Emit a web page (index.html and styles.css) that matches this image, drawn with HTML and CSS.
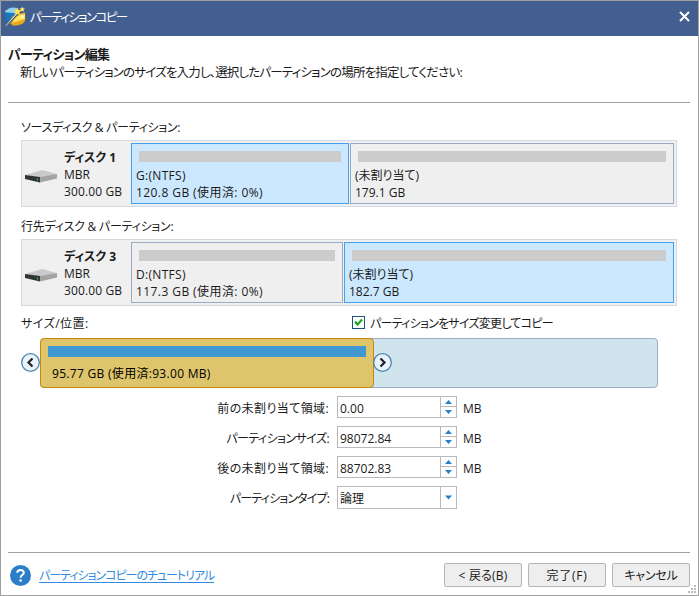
FILE: index.html
```html
<!DOCTYPE html>
<html lang="ja">
<head>
<meta charset="utf-8">
<title>パーティションコピー</title>
<link rel="stylesheet" href="styles.css">
</head>
<body>
<svg class="defs" aria-hidden="true">
  <symbol id="drive" viewBox="0 0 32 13">
    <path d="M0 5L17 0L32 4L15 7.500Z" fill="#cacaca"/>
    <path d="M0 5L15 7V12.500L0 9Z" fill="#333"/>
    <path d="M15 7L32 4V8.500L15 12.500Z" fill="#a4a4a4"/>
    <path d="M12.500 8.500v2" stroke="#28c83c" stroke-width="1.200"/>
  </symbol>
  <symbol id="arrows" viewBox="0 0 15 20">
    <path d="M4 7L7.5 3L11 7ZM4 13H11L7.5 17Z" fill="#2581cb"/>
  </symbol>
</svg>
<div class="window">
  <header class="titlebar">
    <svg class="app-icon" viewBox="0 0 24 24">
      <path d="M1 6Q7 0 14 3L13 11L3 13Z" fill="#8ed2ee"/>
      <path d="M1 7L12 8L6 18Q1 16 1 7" fill="#1978bd"/>
      <path d="M9 11L22 7V16Q20 21 10 21L5 18Z" fill="#e8a91c"/>
      <path d="M10 12L22 9V14L9 18Z" fill="#ffdf55"/>
      <path d="M2 22L14 9" stroke="#56636e" stroke-width="2.2"/>
      <path d="M2 21L13 9" stroke="#d8e5ec"/>
      <path d="M14 2l1.300 2.600 3 .4-2.200 2.100.6 3-2.700-1.500-2.700 1.500.6-3L9.700 5l3-.4z" fill="#ffe34d"/>
      <path d="M19 1l.8 1.800 2 .2-1.400 1.400.3 2-1.700-1-1.700 1 .3-2L16.200 3l2-.2z" fill="#ffe96e"/>
      <path d="M19 8l1 2 2 .3-1.500 1.500.4 2.200-2-1-2 1 .4-2.200L16 10.300l2-.3z" fill="#fff6a0"/>
    </svg>
    <span class="caption">パーティションコピー</span>
    <svg class="close" viewBox="0 0 11 11"><path d="M1 1L10 10M10 1L1 10" stroke="#fff" stroke-width="2"/></svg>
  </header>
  <section class="intro">
    <h1><span class="heading">パーティション編集</span></h1>
    <p><span class="sub">新しいパーティションのサイズを入力し、選択したパーティションの場所を指定してください:</span></p>
  </section>
  <main>
    <div class="label"><span class="l-source">ソースディスク &amp; パーティション:</span></div>
    <div class="disk">
      <svg class="drive"><use href="#drive"/></svg>
      <div class="info"><b class="name">ディスク 1</b><span>MBR</span><span class="cap">300.00 GB</span></div>
      <div class="part selected w218"><i></i><span class="drv">G:(NTFS)</span><span class="used">120.8 GB (使用済: 0%)</span></div>
      <div class="part rest"><i></i><span class="free">(未割り当て)</span><span>179.1 GB</span></div>
    </div>
    <div class="label second"><span class="l-dest">行先ディスク &amp; パーティション:</span></div>
    <div class="disk">
      <svg class="drive"><use href="#drive"/></svg>
      <div class="info"><b class="name">ディスク 3</b><span>MBR</span><span class="cap">300.00 GB</span></div>
      <div class="part w212"><i></i><span class="drv">D:(NTFS)</span><span class="used">117.3 GB (使用済: 0%)</span></div>
      <div class="part selected rest"><i></i><span class="free">(未割り当て)</span><span>182.7 GB</span></div>
    </div>
    <div class="options">
      <span class="l-size">サイズ/位置:</span>
      <label><svg class="check" viewBox="0 0 13 13"><rect x=".5" y=".5" width="12" height="12" fill="#fff" stroke="#1c5180"/><path d="M3 5.500L5.500 8.500L10 3.500" fill="none" stroke="#21a121" stroke-width="2.200"/></svg><span class="l-check">パーティションをサイズ変更してコピー</span></label>
    </div>
    <div class="slider">
      <svg class="knob" viewBox="0 0 19 19"><circle cx="9.500" cy="9.500" r="8.800" fill="#e8f3fb" stroke="#4e86ad" stroke-width="1.300"/><path d="M11.500 5.500L7.500 9.500L11.500 13.500" fill="none" stroke="#222" stroke-width="2.200"/></svg>
      <div class="track">
        <div class="block"><i></i><span class="l-block">95.77 GB (使用済:93.00 MB)</span></div>
        <svg class="knob" viewBox="0 0 19 19"><circle cx="9.500" cy="9.500" r="8.800" fill="#e8f3fb" stroke="#4e86ad" stroke-width="1.300"/><path d="M7.500 5.500L11.500 9.500L7.500 13.500" fill="none" stroke="#222" stroke-width="2.200"/></svg>
      </div>
    </div>
    <div class="form">
      <div class="row"><span class="field-name"><span class="l-area">前の未割り当て領域:</span></span><div class="field"><span>0.00</span><div class="spin"><svg><use href="#arrows"/></svg></div></div><span class="unit">MB</span></div>
      <div class="row"><span class="field-name"><span class="l-psize">パーティションサイズ:</span></span><div class="field"><span>98072.84</span><div class="spin"><svg><use href="#arrows"/></svg></div></div><span class="unit">MB</span></div>
      <div class="row"><span class="field-name"><span class="l-area">後の未割り当て領域:</span></span><div class="field"><span>88702.83</span><div class="spin"><svg><use href="#arrows"/></svg></div></div><span class="unit">MB</span></div>
      <div class="row"><span class="field-name"><span class="l-ptype">パーティションタイプ:</span></span><div class="field combo"><span>論理</span><div class="drop"><svg viewBox="0 0 15 21"><path d="M4 8.500H11L7.500 12.500Z" fill="#2581cb"/></svg></div></div></div>
    </div>
  </main>
  <footer>
    <svg class="help" viewBox="0 0 21 21"><circle cx="10.500" cy="10.500" r="10.500" fill="#2b7fc9"/><path d="M7.200 7.800Q7.400 5 10.500 5T13.800 7.700Q13.800 9 12.200 10Q10.600 11 10.600 12.800" fill="none" stroke="#fff" stroke-width="2"/><circle cx="10.600" cy="15.500" r="1.250" fill="#fff"/></svg>
    <a class="tutorial"><span class="l-link">パーティションコピーのチュートリアル</span></a>
    <button><span class="b-back">&lt; 戻る(B)</span></button>
    <button><span class="b-done">完了(F)</span></button>
    <button><span class="b-cancel">キャンセル</span></button>
    <svg class="grip" viewBox="0 0 9 9"><path d="M6 0h2v2h-2zM3 3h2v2h-2zM6 3h2v2h-2zM0 6h2v2h-2zM3 6h2v2h-2zM6 6h2v2h-2z" fill="#bbb"/></svg>
  </footer>
</div>
</body>
</html>
```

FILE: styles.css
```css
* { box-sizing: border-box; }
body { margin: 0; font: 12px/17px "Open Sans", "Noto Sans CJK JP", sans-serif; font-feature-settings: "palt"; color: #1a1a1a; }
span, b { white-space: nowrap; }
svg { display: block; flex: none; }
i { display: block; }
.defs { position: absolute; width: 0; height: 0; }
.window { width: 699px; height: 596px; border: 1px solid #a0a0a0; background: #fff; display: flex; flex-direction: column; }
.titlebar { height: 35px; background: #435f90; color: #fff; display: flex; align-items: center; padding: 0 8px 4px 3px; }
.app-icon { width: 23px; height: 24px; }
.caption { margin: 2px 0 0 3px; font-size: 12.5px; letter-spacing: -1.55px; flex: 1; }
.close { width: 11px; height: 11px; }
.intro { height: 67px; margin: 0 8px 0 7px; padding-top: 9px; border-bottom: 1px solid #a0a0a0; font-size: 13px; line-height: 18px; }
h1, p { margin: 0; font-size: inherit; }
p { padding-left: 12px; }
.heading { letter-spacing: -.7px; }
.sub { font-size: 12.5px; letter-spacing: -.81px; }
main { flex: 1; padding: 15px 21px 0 20px; }
.label { height: 22px; line-height: 20px; }
.label.second { margin-top: 10px; }
.l-source { letter-spacing: -.3px; }
.l-dest { letter-spacing: -.25px; }
.l-size { letter-spacing: .5px; }
.disk { width: 656px; height: 67px; border: 1px solid #d5d9e2; background: #f0f0f0; display: flex; padding: 2px; gap: 1px; }
.drive { width: 32px; height: 13px; margin: 27px 0 0 1px; }
.info { width: 72px; padding: 6px 0 0 6px; line-height: 17px; display: flex; flex-direction: column; align-items: flex-start; }
.name { font-size: 12px; }
.cap { letter-spacing: .12px; }
.part { border: 1px solid #9cabc5; background: #efefef; padding: 7px 7px 0; display: flex; flex-direction: column; align-items: flex-start; }
.part i { align-self: stretch; height: 11px; background: #ccc; margin-bottom: 5px; }
.part span { margin-left: -3px; }
.drv { letter-spacing: .3px; }
.used { letter-spacing: .42px; }
.selected { background: #cce8ff; border-color: #45a2ee; }
.w218 { width: 218px; }
.w212 { width: 212px; }
.rest { flex: 1; }
.options { display: flex; height: 32px; line-height: 35px; }
.options label { display: flex; margin-left: auto; width: 325px; }
.check { width: 13px; height: 13px; margin: 10px 5px 0 0; }
.l-check { letter-spacing: -.74px; }
.slider { display: flex; align-items: center; height: 50px; }
.knob { width: 19px; height: 19px; margin-top: -2px; }
.track { width: 618px; height: 50px; border: 1px solid #9cadc8; border-radius: 4px; background: #d0e4ee; display: flex; align-items: center; }
.block { width: 334px; height: 50px; margin: 0 -1px; border: 1px solid #cb860c; border-radius: 4px; background: #dec56c; padding: 7px; }
.block i { height: 11px; background: #4098d3; }
.l-block { display: inline-block; margin: 8px 0 0 4px; color: #000; letter-spacing: .3px; }
.form { padding-top: 8px; display: grid; row-gap: 8px; }
.row { display: flex; height: 22px; align-items: center; }
.field-name { width: 316px; padding: 2px 8px 0 0; text-align: right; }
.l-area { letter-spacing: .4px; }
.l-psize { letter-spacing: -.58px; }
.l-ptype { letter-spacing: -.85px; }
.field { width: 120px; height: 22px; border: 1px solid #b9b9bd; display: flex; }
.field > span { flex: 1; padding-left: 2px; line-height: 23px; }
.spin { width: 16px; height: 20px; border-left: 1px solid #b9b9bd; background: linear-gradient(#b9b9bd, #b9b9bd) 0 9px / 15px 1px no-repeat; }
.spin svg { width: 15px; height: 20px; }
.combo { height: 23px; align-self: flex-start; }
.drop { width: 16px; border-left: 1px solid #b9b9bd; }
.drop svg { width: 15px; height: 21px; }
.unit { margin: 2px 0 0 6px; }
footer { height: 43px; margin: 0 0 0 7px; padding: 10px 1px 0 2px; display: flex; gap: 6px; background: linear-gradient(#a0a0a0, #a0a0a0) 0 0 / 682px 1px no-repeat; }
.help { width: 21px; height: 21px; margin-top: 3px; }
.tutorial { color: #328be0; text-decoration: underline; text-underline-offset: 2px; margin: 5px auto 0 2px; }
.l-link { letter-spacing: -1.02px; }
button { width: 78px; height: 24px; margin-top: 1px; padding: 1px 0 0; border: 1px solid #b5b5b5; border-radius: 2px; background: #eee; font: inherit; font-feature-settings: inherit; color: #1a1a1a; }
.b-back { letter-spacing: .2px; }
.b-done { letter-spacing: .7px; }
.b-cancel { letter-spacing: -.2px; }
.grip { width: 9px; height: 9px; margin: 23px 0 0 -8px; }
```
